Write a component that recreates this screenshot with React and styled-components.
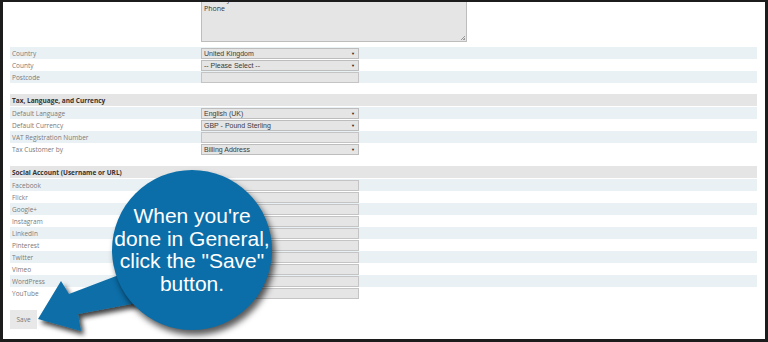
import React from "react";
import styled, { createGlobalStyle } from "styled-components";

const GlobalStyle = createGlobalStyle`
  html, body {
    margin: 0;
    padding: 0;
    background: #fff;
  }
  body {
    font-family: "Open Sans", "Liberation Sans", sans-serif;
  }
`;

const locationRows = [
  { label: "Country", kind: "select", value: "United Kingdom" },
  { label: "County", kind: "select", value: "-- Please Select --" },
  { label: "Postcode", kind: "input" },
];

const taxRows = [
  { label: "Default Language", kind: "select", value: "English (UK)" },
  { label: "Default Currency", kind: "select", value: "GBP - Pound Sterling" },
  { label: "VAT Registration Number", kind: "input" },
  { label: "Tax Customer by", kind: "select", value: "Billing Address" },
];

const socialRows = [
  "Facebook",
  "Flickr",
  "Google+",
  "Instagram",
  "LinkedIn",
  "Pinterest",
  "Twitter",
  "Vimeo",
  "WordPress",
  "YouTube",
].map((label) => ({ label, kind: "input" }));

const Field = ({ row }) =>
  row.kind === "select" ? (
    <Select>
      <span>{row.value}</span>
      <Caret>▼</Caret>
    </Select>
  ) : (
    <Input />
  );

const Rows = ({ rows }) =>
  rows.map((row, i) => (
    <Row key={row.label} striped={i % 2 === 0}>
      <Label>{row.label}</Label>
      <Field row={row} />
    </Row>
  ));

const App = () => {
  return (
    <>
      <GlobalStyle />
      <Frame>
        <TextAreaWrap>
          <TextArea>
            Fax/Day
            <br />
            Phone
            <Grip />
          </TextArea>
        </TextAreaWrap>

        <Section>
          <Rows rows={locationRows} />
        </Section>

        <Section>
          <Header>Tax, Language, and Currency</Header>
          <Rows rows={taxRows} />
        </Section>

        <Section>
          <Header>Social Account (Username or URL)</Header>
          <Rows rows={socialRows} />
        </Section>

        <SaveButton>Save</SaveButton>

        <Arrow viewBox="0 0 768 342">
          <defs>
            <filter id="shadow" x="-20%" y="-20%" width="140%" height="140%">
              <feDropShadow dx="3" dy="4" stdDeviation="2.5" floodColor="#000" floodOpacity="0.75" />
            </filter>
          </defs>
          <polygon
            points="38,319 61,281 69,294 132,270 142,302 78,314 81,331"
            fill="#0b6ea8"
            filter="url(#shadow)"
          />
        </Arrow>

        <Bubble>
          When you're
          <br />
          done in General,
          <br />
          click the "Save"
          <br />
          button.
        </Bubble>
      </Frame>
    </>
  );
};

export default App;

const Frame = styled.div`
  position: relative;
  box-sizing: border-box;
  width: 768px;
  height: 342px;
  overflow: hidden;
  background: #fff;
  border-style: solid;
  border-color: #1c1c1c;
  border-width: 2px 3px 3px 3px;
  padding: 0 8px 0 7px;
`;

const TextAreaWrap = styled.div`
  padding-left: 191px;
  margin-top: -10px;
  margin-bottom: 5px;
`;

const TextArea = styled.div`
  position: relative;
  box-sizing: border-box;
  width: 266px;
  height: 50px;
  background: #e5e5e5;
  border: 1px solid #bdbdbd;
  padding: 2px 2px;
  font-size: 7px;
  line-height: 9px;
  color: #333;
`;

const Grip = styled.span`
  position: absolute;
  right: 1px;
  bottom: 1px;
  width: 4px;
  height: 4px;
  background: linear-gradient(135deg, transparent 50%, #999 50%, #999 60%, transparent 60%, transparent 75%, #999 75%);
`;

const Section = styled.div`
  margin-bottom: 11px;
`;

const Header = styled.div`
  height: 12px;
  display: flex;
  align-items: center;
  padding-left: 2px;
  background: #e5e5e5;
  font-size: 6.5px;
  font-weight: 700;
  color: #333;
  margin-bottom: 1px;
`;

const Row = styled.div`
  display: grid;
  grid-template-columns: 191px 158px;
  align-items: center;
  height: 12px;
  background: ${(p) => (p.striped ? "#eaf1f5" : "#fff")};
`;

const Label = styled.div`
  padding-left: 2px;
  font-size: 6.5px;
  color: #7a7a7a;
  white-space: nowrap;
`;

const Select = styled.div`
  box-sizing: border-box;
  height: 11px;
  display: flex;
  align-items: center;
  justify-content: space-between;
  padding: 0 3px 0 2px;
  background: #e5e5e5;
  border: 1px solid #bdbdbd;
  font-family: "Liberation Sans", Arial, sans-serif;
  font-size: 7px;
  color: #3a3a3a;
  white-space: nowrap;
`;

const Caret = styled.span`
  font-size: 4px;
  color: #222;
`;

const Input = styled.div`
  box-sizing: border-box;
  height: 11px;
  background: #e5e5e5;
  border: 1px solid #c4c4c4;
`;

const SaveButton = styled.button`
  display: block;
  box-sizing: border-box;
  width: 27px;
  height: 19px;
  margin-top: 1px;
  padding: 0;
  border: none;
  background: #e8e8e8;
  font-family: "Open Sans", "Liberation Sans", sans-serif;
  font-size: 6.5px;
  color: #777;
`;

const Arrow = styled.svg`
  position: absolute;
  top: -2px;
  left: -3px;
  width: 768px;
  height: 342px;
  pointer-events: none;
`;

const Bubble = styled.div`
  position: absolute;
  left: 109px;
  top: 168px;
  width: 160px;
  height: 160px;
  border-radius: 50%;
  background: #0b6ea8;
  box-shadow: 3px 5px 6px rgba(0, 0, 0, 0.65);
  display: flex;
  align-items: center;
  justify-content: center;
  text-align: center;
  font-family: "Liberation Sans", Arial, sans-serif;
  font-size: 21px;
  line-height: 22.5px;
  color: #fff;
`;
